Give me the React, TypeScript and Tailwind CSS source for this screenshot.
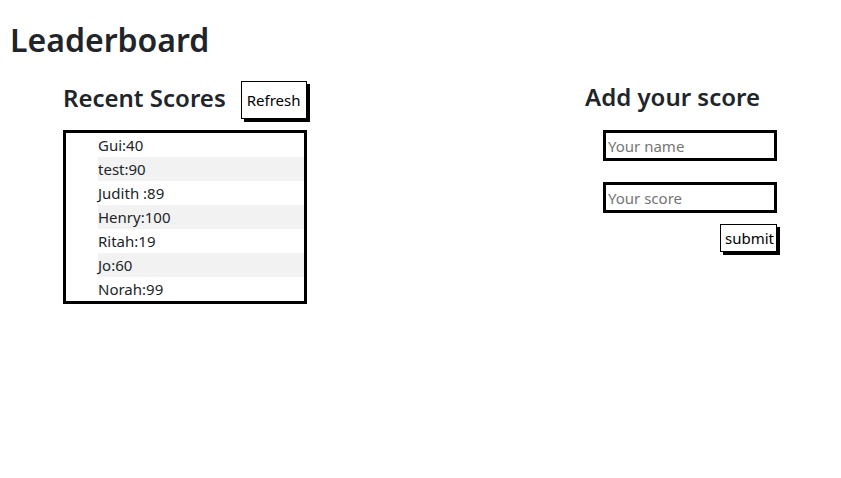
const scores = [
  { user: "Gui", score: 40 },
  { user: "test", score: 90 },
  { user: "Judith ", score: 89 },
  { user: "Henry", score: 100 },
  { user: "Ritah", score: 19 },
  { user: "Jo", score: 60 },
  { user: "Norah", score: 99 },
];

export default function App() {
  return (
    <div className="min-h-screen bg-white font-['Noto_Sans',sans-serif] text-[#212529]">
      <h1 className="px-[10px] pt-[20px] text-[32px] font-semibold leading-[40px]">
        Leaderboard
      </h1>

      <main className="flex pt-[21px]">
        {/* Recent scores */}
        <section className="ml-[63px] w-[247px]">
          <div className="flex items-start gap-[15px]">
            <h2 className="text-[24px] font-semibold leading-[34px]">Recent Scores</h2>
            <button className="h-[38px] border border-black bg-white px-[5px] text-[15px] text-black shadow-[3px_3px_0_#000]">
              Refresh
            </button>
          </div>
          <ul className="mt-[11px] w-[244px] border-[3px] border-black pl-[32px]">
            {scores.map((s, i) => (
              <li
                key={i}
                className={`h-[24px] text-[15px] leading-[24px] ${i % 2 === 1 ? "bg-[#f2f2f2]" : ""}`}
              >
                {s.user}:{s.score}
              </li>
            ))}
          </ul>
        </section>

        {/* Add score */}
        <section className="ml-[275px] flex w-[192px] flex-col">
          <h2 className="-mt-[3px] text-[24px] font-semibold leading-[38px]">Add your score</h2>
          <form className="flex flex-col items-end pt-[14px]" onSubmit={(e) => e.preventDefault()}>
            <input
              placeholder="Your name"
              className="h-[31px] w-[174px] border-[3px] border-black px-[2px] text-[15px] outline-none placeholder:text-[#757575]"
            />
            <input
              placeholder="Your score"
              className="mt-[21px] h-[31px] w-[174px] border-[3px] border-black px-[2px] text-[15px] outline-none placeholder:text-[#757575]"
            />
            <button
              type="submit"
              className="mt-[11px] h-[28px] border border-black bg-white pl-[4px] pr-[2px] text-[15px] leading-[20px] text-black shadow-[3px_3px_0_#000]"
            >
              submit
            </button>
          </form>
        </section>
      </main>
    </div>
  );
}
